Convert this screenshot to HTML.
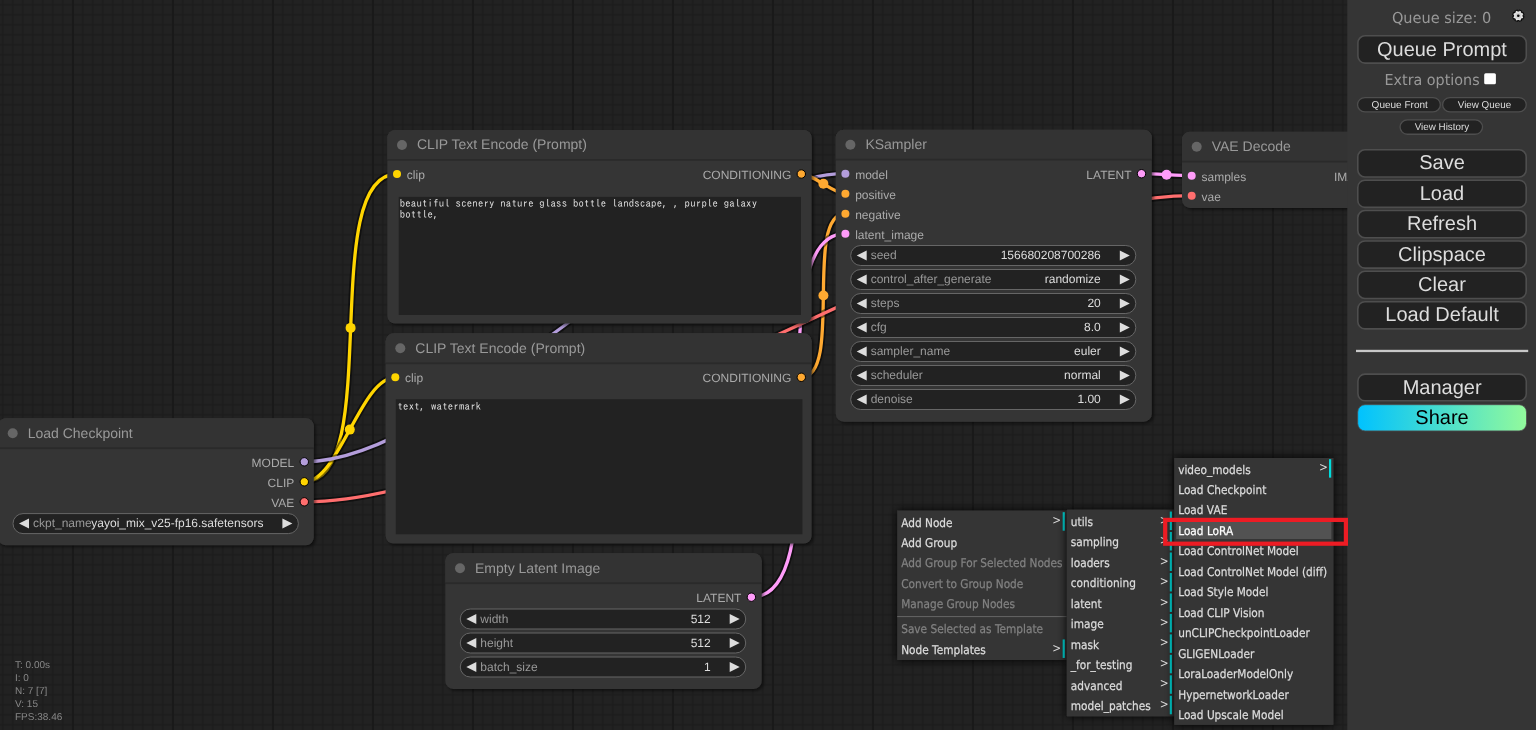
<!DOCTYPE html><html><head><meta charset="utf-8"><title>ComfyUI</title><style>html,body{margin:0;padding:0;background:#222;overflow:hidden}svg{display:block}</style></head><body>
<svg width="1536" height="730" viewBox="0 0 1536 730" text-rendering="geometricPrecision" style="opacity:0.999">
<defs>
<pattern id="g" x="67.7" y="-0.3" width="10" height="10" patternUnits="userSpaceOnUse"><rect width="10" height="10" fill="#222222"/><rect x="0" y="4.3" width="10" height="1.5" fill="#1c1c1c"/><rect x="4.2" y="0" width="1.6" height="10" fill="#1c1c1c"/></pattern>
<pattern id="G" x="23" y="0" width="100" height="100" patternUnits="userSpaceOnUse"><rect x="48.9" y="0" width="2.2" height="100" fill="#191919"/></pattern>
<filter id="sh" x="-5%" y="-10%" width="110%" height="125%"><feDropShadow dx="2" dy="2" stdDeviation="1.5" flood-color="#000" flood-opacity="0.5"/></filter>
<filter id="ms" x="-30%" y="-30%" width="160%" height="160%"><feDropShadow dx="0" dy="0" stdDeviation="5" flood-color="#000" flood-opacity="1"/></filter>
<linearGradient id="shg" x1="0" x2="1" y1="0" y2="0"><stop offset="0" stop-color="#00C2FF"/><stop offset="1" stop-color="#92FA9C"/></linearGradient>
</defs>
<rect width="1536" height="730" fill="url(#g)"/>
<rect width="1536" height="730" fill="url(#G)"/>
<path d="M304.3 481.8C384.7 481.8 316.6 174.0 397.0 174.0" fill="none" stroke="rgba(0,0,0,0.5)" stroke-width="7"/>
<path d="M304.3 481.8C384.7 481.8 316.6 174.0 397.0 174.0" fill="none" stroke="#FFD500" stroke-width="3.3"/>
<circle cx="350.6" cy="327.9" r="5" fill="#FFD500"/>
<path d="M304.3 481.8C338.9 481.8 360.7 377.3 395.3 377.3" fill="none" stroke="rgba(0,0,0,0.5)" stroke-width="7"/>
<path d="M304.3 481.8C338.9 481.8 360.7 377.3 395.3 377.3" fill="none" stroke="#FFD500" stroke-width="3.3"/>
<circle cx="349.8" cy="429.6" r="5" fill="#FFD500"/>
<path d="M304.3 461.8C457.6 461.8 692.1 173.7 845.4 173.7" fill="none" stroke="rgba(0,0,0,0.5)" stroke-width="7"/>
<path d="M304.3 461.8C457.6 461.8 692.1 173.7 845.4 173.7" fill="none" stroke="#B39DDB" stroke-width="3.3"/>
<circle cx="574.9" cy="317.8" r="5" fill="#B39DDB"/>
<path d="M801.3 174.0C813.4 174.0 833.3 193.7 845.4 193.7" fill="none" stroke="rgba(0,0,0,0.5)" stroke-width="7"/>
<path d="M801.3 174.0C813.4 174.0 833.3 193.7 845.4 193.7" fill="none" stroke="#FFA931" stroke-width="3.3"/>
<circle cx="823.4" cy="183.8" r="5" fill="#FFA931"/>
<path d="M801.3 377.3C843.7 377.3 803.0 213.7 845.4 213.7" fill="none" stroke="rgba(0,0,0,0.5)" stroke-width="7"/>
<path d="M801.3 377.3C843.7 377.3 803.0 213.7 845.4 213.7" fill="none" stroke="#FFA931" stroke-width="3.3"/>
<circle cx="823.4" cy="295.5" r="5" fill="#FFA931"/>
<path d="M751.4 597.2C845.3 597.2 751.5 233.7 845.4 233.7" fill="none" stroke="rgba(0,0,0,0.5)" stroke-width="7"/>
<path d="M751.4 597.2C845.3 597.2 751.5 233.7 845.4 233.7" fill="none" stroke="#FF9CF9" stroke-width="3.3"/>
<circle cx="798.4" cy="415.4" r="5" fill="#FF9CF9"/>
<path d="M1141.5 173.7C1154.1 173.7 1179.1 175.7 1191.7 175.7" fill="none" stroke="rgba(0,0,0,0.5)" stroke-width="7"/>
<path d="M1141.5 173.7C1154.1 173.7 1179.1 175.7 1191.7 175.7" fill="none" stroke="#FF9CF9" stroke-width="3.3"/>
<circle cx="1166.6" cy="174.7" r="5" fill="#FF9CF9"/>
<path d="M304.3 501.8C539.0 501.8 957.0 195.7 1191.7 195.7" fill="none" stroke="rgba(0,0,0,0.5)" stroke-width="7"/>
<path d="M304.3 501.8C539.0 501.8 957.0 195.7 1191.7 195.7" fill="none" stroke="#FF6E6E" stroke-width="3.3"/>
<circle cx="748.0" cy="348.8" r="5" fill="#FF6E6E"/>
<g transform="translate(-2.0,448.2)">
<rect x="0" y="-30" width="315.8" height="127.1" rx="8" fill="#353535" filter="url(#sh)"/>
<path d="M0 0V-22a8 8 0 0 1 8 -8H307.8a8 8 0 0 1 8 8V0Z" fill="#333333"/>
<rect x="0" y="-1" width="315.8" height="2" fill="rgba(0,0,0,0.16)"/>
<circle cx="14.7" cy="-15" r="5" fill="#666"/>
<text x="29.7" y="-10.40" font-size="14" fill="#999" font-family="Liberation Sans, Arial, sans-serif">Load Checkpoint</text>
<circle cx="306.30" cy="13.60" r="4.2" fill="#B39DDB" stroke="#000" stroke-width="1"/>
<text x="296.30" y="18.80" font-size="12" fill="#AAA" text-anchor="end" font-family="Liberation Sans, Arial, sans-serif">MODEL</text>
<circle cx="306.30" cy="33.60" r="4.2" fill="#FFD500" stroke="#000" stroke-width="1"/>
<text x="296.30" y="38.80" font-size="12" fill="#AAA" text-anchor="end" font-family="Liberation Sans, Arial, sans-serif">CLIP</text>
<circle cx="306.30" cy="53.60" r="4.2" fill="#FF6E6E" stroke="#000" stroke-width="1"/>
<text x="296.30" y="58.80" font-size="12" fill="#AAA" text-anchor="end" font-family="Liberation Sans, Arial, sans-serif">VAE</text>
<rect x="15" y="65.4" width="285.40" height="20" rx="10" fill="#222" stroke="#666" stroke-width="1"/>
<path d="M31 70.4L21 75.4L31 80.4Z" fill="#DDD"/>
<path d="M284.40 70.4L294.40 75.4L284.40 80.4Z" fill="#DDD"/>
<text x="35" y="79.0" font-size="12" fill="#999" font-family="Liberation Sans, Arial, sans-serif">ckpt_name</text>
<text x="265.40" y="79.0" font-size="12" fill="#DDD" text-anchor="end" font-family="Liberation Sans, Arial, sans-serif">yayoi_mix_v25-fp16.safetensors</text>
</g>
<g transform="translate(387.3,160.0)">
<rect x="0" y="-30" width="424.3" height="193.5" rx="8" fill="#353535" filter="url(#sh)"/>
<path d="M0 0V-22a8 8 0 0 1 8 -8H416.3a8 8 0 0 1 8 8V0Z" fill="#333333"/>
<rect x="0" y="-1" width="424.3" height="2" fill="rgba(0,0,0,0.16)"/>
<circle cx="14.7" cy="-15" r="5" fill="#666"/>
<text x="29.7" y="-10.90" font-size="14" fill="#999" font-family="Liberation Sans, Arial, sans-serif">CLIP Text Encode (Prompt)</text>
<circle cx="9.7" cy="14.0" r="4" fill="#FFD500"/>
<text x="19.5" y="19.2" font-size="12" fill="#AAA" font-family="Liberation Sans, Arial, sans-serif">clip</text>
<circle cx="414.00" cy="14.00" r="4.2" fill="#FFA931" stroke="#000" stroke-width="1"/>
<text x="404.00" y="19.20" font-size="12" fill="#AAA" text-anchor="end" font-family="Liberation Sans, Arial, sans-serif">CONDITIONING</text>
</g>
<g transform="translate(385.6,363.3)">
<rect x="0" y="-30" width="426.0" height="210.2" rx="8" fill="#353535" filter="url(#sh)"/>
<path d="M0 0V-22a8 8 0 0 1 8 -8H418.0a8 8 0 0 1 8 8V0Z" fill="#333333"/>
<rect x="0" y="-1" width="426.0" height="2" fill="rgba(0,0,0,0.16)"/>
<circle cx="14.7" cy="-15" r="5" fill="#666"/>
<text x="29.7" y="-10.40" font-size="14" fill="#999" font-family="Liberation Sans, Arial, sans-serif">CLIP Text Encode (Prompt)</text>
<circle cx="9.7" cy="14.0" r="4" fill="#FFD500"/>
<text x="19.5" y="19.2" font-size="12" fill="#AAA" font-family="Liberation Sans, Arial, sans-serif">clip</text>
<circle cx="415.70" cy="14.00" r="4.2" fill="#FFA931" stroke="#000" stroke-width="1"/>
<text x="405.70" y="19.20" font-size="12" fill="#AAA" text-anchor="end" font-family="Liberation Sans, Arial, sans-serif">CONDITIONING</text>
</g>
<g transform="translate(835.7,159.7)">
<rect x="0" y="-30" width="316.1" height="292.0" rx="8" fill="#353535" filter="url(#sh)"/>
<path d="M0 0V-22a8 8 0 0 1 8 -8H308.1a8 8 0 0 1 8 8V0Z" fill="#333333"/>
<rect x="0" y="-1" width="316.1" height="2" fill="rgba(0,0,0,0.16)"/>
<circle cx="14.7" cy="-15" r="5" fill="#666"/>
<text x="29.7" y="-10.40" font-size="14" fill="#999" font-family="Liberation Sans, Arial, sans-serif">KSampler</text>
<circle cx="9.7" cy="14.0" r="4" fill="#B39DDB"/>
<text x="19.5" y="19.2" font-size="12" fill="#AAA" font-family="Liberation Sans, Arial, sans-serif">model</text>
<circle cx="9.7" cy="34.0" r="4" fill="#FFA931"/>
<text x="19.5" y="39.2" font-size="12" fill="#AAA" font-family="Liberation Sans, Arial, sans-serif">positive</text>
<circle cx="9.7" cy="54.0" r="4" fill="#FFA931"/>
<text x="19.5" y="59.2" font-size="12" fill="#AAA" font-family="Liberation Sans, Arial, sans-serif">negative</text>
<circle cx="9.7" cy="74.0" r="4" fill="#FF9CF9"/>
<text x="19.5" y="79.2" font-size="12" fill="#AAA" font-family="Liberation Sans, Arial, sans-serif">latent_image</text>
<circle cx="305.80" cy="14.00" r="4.2" fill="#FF9CF9" stroke="#000" stroke-width="1"/>
<text x="295.80" y="19.20" font-size="12" fill="#AAA" text-anchor="end" font-family="Liberation Sans, Arial, sans-serif">LATENT</text>
<rect x="15" y="85.8" width="285.10" height="20" rx="10" fill="#222" stroke="#666" stroke-width="1"/>
<path d="M31 90.8L21 95.8L31 100.8Z" fill="#DDD"/>
<path d="M284.10 90.8L294.10 95.8L284.10 100.8Z" fill="#DDD"/>
<text x="35" y="99.39999999999999" font-size="12" fill="#999" font-family="Liberation Sans, Arial, sans-serif">seed</text>
<text x="265.10" y="99.39999999999999" font-size="12" fill="#DDD" text-anchor="end" font-family="Liberation Sans, Arial, sans-serif">156680208700286</text>
<rect x="15" y="109.8" width="285.10" height="20" rx="10" fill="#222" stroke="#666" stroke-width="1"/>
<path d="M31 114.8L21 119.8L31 124.8Z" fill="#DDD"/>
<path d="M284.10 114.8L294.10 119.8L284.10 124.8Z" fill="#DDD"/>
<text x="35" y="123.39999999999999" font-size="12" fill="#999" font-family="Liberation Sans, Arial, sans-serif">control_after_generate</text>
<text x="265.10" y="123.39999999999999" font-size="12" fill="#DDD" text-anchor="end" font-family="Liberation Sans, Arial, sans-serif">randomize</text>
<rect x="15" y="133.8" width="285.10" height="20" rx="10" fill="#222" stroke="#666" stroke-width="1"/>
<path d="M31 138.8L21 143.8L31 148.8Z" fill="#DDD"/>
<path d="M284.10 138.8L294.10 143.8L284.10 148.8Z" fill="#DDD"/>
<text x="35" y="147.4" font-size="12" fill="#999" font-family="Liberation Sans, Arial, sans-serif">steps</text>
<text x="265.10" y="147.4" font-size="12" fill="#DDD" text-anchor="end" font-family="Liberation Sans, Arial, sans-serif">20</text>
<rect x="15" y="157.8" width="285.10" height="20" rx="10" fill="#222" stroke="#666" stroke-width="1"/>
<path d="M31 162.8L21 167.8L31 172.8Z" fill="#DDD"/>
<path d="M284.10 162.8L294.10 167.8L284.10 172.8Z" fill="#DDD"/>
<text x="35" y="171.4" font-size="12" fill="#999" font-family="Liberation Sans, Arial, sans-serif">cfg</text>
<text x="265.10" y="171.4" font-size="12" fill="#DDD" text-anchor="end" font-family="Liberation Sans, Arial, sans-serif">8.0</text>
<rect x="15" y="181.8" width="285.10" height="20" rx="10" fill="#222" stroke="#666" stroke-width="1"/>
<path d="M31 186.8L21 191.8L31 196.8Z" fill="#DDD"/>
<path d="M284.10 186.8L294.10 191.8L284.10 196.8Z" fill="#DDD"/>
<text x="35" y="195.4" font-size="12" fill="#999" font-family="Liberation Sans, Arial, sans-serif">sampler_name</text>
<text x="265.10" y="195.4" font-size="12" fill="#DDD" text-anchor="end" font-family="Liberation Sans, Arial, sans-serif">euler</text>
<rect x="15" y="205.8" width="285.10" height="20" rx="10" fill="#222" stroke="#666" stroke-width="1"/>
<path d="M31 210.8L21 215.8L31 220.8Z" fill="#DDD"/>
<path d="M284.10 210.8L294.10 215.8L284.10 220.8Z" fill="#DDD"/>
<text x="35" y="219.4" font-size="12" fill="#999" font-family="Liberation Sans, Arial, sans-serif">scheduler</text>
<text x="265.10" y="219.4" font-size="12" fill="#DDD" text-anchor="end" font-family="Liberation Sans, Arial, sans-serif">normal</text>
<rect x="15" y="229.8" width="285.10" height="20" rx="10" fill="#222" stroke="#666" stroke-width="1"/>
<path d="M31 234.8L21 239.8L31 244.8Z" fill="#DDD"/>
<path d="M284.10 234.8L294.10 239.8L284.10 244.8Z" fill="#DDD"/>
<text x="35" y="243.4" font-size="12" fill="#999" font-family="Liberation Sans, Arial, sans-serif">denoise</text>
<text x="265.10" y="243.4" font-size="12" fill="#DDD" text-anchor="end" font-family="Liberation Sans, Arial, sans-serif">1.00</text>
</g>
<g transform="translate(1182.0,161.7)">
<rect x="0" y="-30" width="211.0" height="76.2" rx="8" fill="#353535" filter="url(#sh)"/>
<path d="M0 0V-22a8 8 0 0 1 8 -8H203.0a8 8 0 0 1 8 8V0Z" fill="#333333"/>
<rect x="0" y="-1" width="211.0" height="2" fill="rgba(0,0,0,0.16)"/>
<circle cx="14.7" cy="-15" r="5" fill="#666"/>
<text x="29.7" y="-10.70" font-size="14" fill="#999" font-family="Liberation Sans, Arial, sans-serif">VAE Decode</text>
<circle cx="9.7" cy="14.0" r="4" fill="#FF9CF9"/>
<text x="19.5" y="19.2" font-size="12" fill="#AAA" font-family="Liberation Sans, Arial, sans-serif">samples</text>
<circle cx="9.7" cy="34.0" r="4" fill="#FF6E6E"/>
<text x="19.5" y="39.2" font-size="12" fill="#AAA" font-family="Liberation Sans, Arial, sans-serif">vae</text>
<circle cx="200.70" cy="14.00" r="4.2" fill="#64B5F6" stroke="#000" stroke-width="1"/>
<text x="190.70" y="19.20" font-size="12" fill="#AAA" text-anchor="end" font-family="Liberation Sans, Arial, sans-serif">IMAGE</text>
</g>
<g transform="translate(445.3,583.2)">
<rect x="0" y="-30" width="316.4" height="135.7" rx="8" fill="#353535" filter="url(#sh)"/>
<path d="M0 0V-22a8 8 0 0 1 8 -8H308.4a8 8 0 0 1 8 8V0Z" fill="#333333"/>
<rect x="0" y="-1" width="316.4" height="2" fill="rgba(0,0,0,0.16)"/>
<circle cx="14.7" cy="-15" r="5" fill="#666"/>
<text x="29.7" y="-10.40" font-size="14" fill="#999" font-family="Liberation Sans, Arial, sans-serif">Empty Latent Image</text>
<circle cx="306.10" cy="14.00" r="4.2" fill="#FF9CF9" stroke="#000" stroke-width="1"/>
<text x="296.10" y="19.20" font-size="12" fill="#AAA" text-anchor="end" font-family="Liberation Sans, Arial, sans-serif">LATENT</text>
<rect x="15" y="25.8" width="285.40" height="20" rx="10" fill="#222" stroke="#666" stroke-width="1"/>
<path d="M31 30.8L21 35.8L31 40.8Z" fill="#DDD"/>
<path d="M284.40 30.8L294.40 35.8L284.40 40.8Z" fill="#DDD"/>
<text x="35" y="39.4" font-size="12" fill="#999" font-family="Liberation Sans, Arial, sans-serif">width</text>
<text x="265.40" y="39.4" font-size="12" fill="#DDD" text-anchor="end" font-family="Liberation Sans, Arial, sans-serif">512</text>
<rect x="15" y="49.8" width="285.40" height="20" rx="10" fill="#222" stroke="#666" stroke-width="1"/>
<path d="M31 54.8L21 59.8L31 64.8Z" fill="#DDD"/>
<path d="M284.40 54.8L294.40 59.8L284.40 64.8Z" fill="#DDD"/>
<text x="35" y="63.4" font-size="12" fill="#999" font-family="Liberation Sans, Arial, sans-serif">height</text>
<text x="265.40" y="63.4" font-size="12" fill="#DDD" text-anchor="end" font-family="Liberation Sans, Arial, sans-serif">512</text>
<rect x="15" y="73.8" width="285.40" height="20" rx="10" fill="#222" stroke="#666" stroke-width="1"/>
<path d="M31 78.8L21 83.8L31 88.8Z" fill="#DDD"/>
<path d="M284.40 78.8L294.40 83.8L284.40 88.8Z" fill="#DDD"/>
<text x="35" y="87.39999999999999" font-size="12" fill="#999" font-family="Liberation Sans, Arial, sans-serif">batch_size</text>
<text x="265.40" y="87.39999999999999" font-size="12" fill="#DDD" text-anchor="end" font-family="Liberation Sans, Arial, sans-serif">1</text>
</g>
<rect x="398.7" y="196.9" width="402.3" height="118.1" fill="#222"/>
<text x="399.7" y="207.20000000000002" font-size="10.6" letter-spacing="0.29" fill="#DDD" font-family="IPAGothic, Liberation Mono, monospace" xml:space="preserve">beautiful scenery nature glass bottle landscape, , purple galaxy</text>
<text x="399.7" y="217.9" font-size="10.6" letter-spacing="0.29" fill="#DDD" font-family="IPAGothic, Liberation Mono, monospace" xml:space="preserve">bottle,</text>
<rect x="395.8" y="399.2" width="406.59999999999997" height="135.09999999999997" fill="#222"/>
<text x="397.5" y="410.4" font-size="10.6" letter-spacing="0.29" fill="#DDD" font-family="IPAGothic, Liberation Mono, monospace" xml:space="preserve">text, watermark</text>
<text x="15" y="668.0" font-size="10" fill="#888" font-family="Liberation Sans, Arial, sans-serif">T: 0.00s</text>
<text x="15" y="681.0" font-size="10" fill="#888" font-family="Liberation Sans, Arial, sans-serif">I: 0</text>
<text x="15" y="694.0" font-size="10" fill="#888" font-family="Liberation Sans, Arial, sans-serif">N: 7 [7]</text>
<text x="15" y="707.0" font-size="10" fill="#888" font-family="Liberation Sans, Arial, sans-serif">V: 15</text>
<text x="15" y="720.0" font-size="10" fill="#888" font-family="Liberation Sans, Arial, sans-serif">FPS:38.46</text>
<rect x="1347.3" y="0" width="188.70000000000005" height="730" fill="#353535"/>
<text x="1391.90" y="22.5" font-size="15" fill="#999" textLength="99.37" lengthAdjust="spacingAndGlyphs" font-family="DejaVu Sans, Liberation Sans, sans-serif" >Queue size: 0</text>
<text x="1384.50" y="85.2" font-size="15" fill="#999" textLength="95.11" lengthAdjust="spacingAndGlyphs" font-family="DejaVu Sans, Liberation Sans, sans-serif" >Extra options</text>
<rect x="1484.2" y="73.2" width="11.7" height="11.1" rx="1.5" fill="#fff"/>
<path d="M1519.33 10.04L1521.57 10.97L1521.30 11.95L1522.05 12.70L1523.03 12.43L1523.96 14.67L1523.07 15.17L1523.07 16.23L1523.96 16.73L1523.03 18.97L1522.05 18.70L1521.30 19.45L1521.57 20.43L1519.33 21.36L1518.83 20.47L1517.77 20.47L1517.27 21.36L1515.03 20.43L1515.30 19.45L1514.55 18.70L1513.57 18.97L1512.64 16.73L1513.53 16.23L1513.53 15.17L1512.64 14.67L1513.57 12.43L1514.55 12.70L1515.30 11.95L1515.03 10.97L1517.27 10.04L1517.77 10.93L1518.83 10.93Z" fill="#e4e4e4" stroke="#0c0c0c" stroke-width="1.1" stroke-linejoin="round"/>
<circle cx="1518.3" cy="15.7" r="3.0" fill="#d2d2d2"/>
<circle cx="1518.3" cy="15.7" r="1.3" fill="#080808"/>
<rect x="1357.90" y="35.80" width="168.40" height="27.30" rx="7.2" fill="#222" stroke="#4e4e4e" stroke-width="1.6"/>
<text x="1377.00" y="55.5" font-size="20" fill="#ddd" textLength="129.87" lengthAdjust="spacingAndGlyphs" font-family="Liberation Sans, Arial, sans-serif" >Queue Prompt</text>
<rect x="1357.55" y="97.55" width="82.80" height="14.30" rx="7.35" fill="#222" stroke="#4e4e4e" stroke-width="1.3"/>
<text x="1371.60" y="107.9" font-size="10" fill="#ddd" textLength="56.29" lengthAdjust="spacingAndGlyphs" font-family="Liberation Sans, Arial, sans-serif" >Queue Front</text>
<rect x="1442.65" y="97.55" width="83.60" height="14.30" rx="7.35" fill="#222" stroke="#4e4e4e" stroke-width="1.3"/>
<text x="1457.80" y="107.9" font-size="10" fill="#ddd" textLength="53.30" lengthAdjust="spacingAndGlyphs" font-family="Liberation Sans, Arial, sans-serif" >View Queue</text>
<rect x="1400.05" y="119.95" width="82.50" height="14.30" rx="7.35" fill="#222" stroke="#4e4e4e" stroke-width="1.3"/>
<text x="1414.70" y="130.1" font-size="10" fill="#ddd" textLength="54.49" lengthAdjust="spacingAndGlyphs" font-family="Liberation Sans, Arial, sans-serif" >View History</text>
<rect x="1357.80" y="149.80" width="168.40" height="27.20" rx="7.2" fill="#222" stroke="#4e4e4e" stroke-width="1.6"/>
<text x="1442.00" y="169.4" font-size="20" fill="#ddd" text-anchor="middle" font-family="Liberation Sans, Arial, sans-serif">Save</text>
<rect x="1357.80" y="180.18" width="168.40" height="27.20" rx="7.2" fill="#222" stroke="#4e4e4e" stroke-width="1.6"/>
<text x="1442.00" y="199.8" font-size="20" fill="#ddd" text-anchor="middle" font-family="Liberation Sans, Arial, sans-serif">Load</text>
<rect x="1357.80" y="210.56" width="168.40" height="27.20" rx="7.2" fill="#222" stroke="#4e4e4e" stroke-width="1.6"/>
<text x="1442.00" y="230.2" font-size="20" fill="#ddd" text-anchor="middle" font-family="Liberation Sans, Arial, sans-serif">Refresh</text>
<rect x="1357.80" y="240.94" width="168.40" height="27.20" rx="7.2" fill="#222" stroke="#4e4e4e" stroke-width="1.6"/>
<text x="1442.00" y="260.6" font-size="20" fill="#ddd" text-anchor="middle" font-family="Liberation Sans, Arial, sans-serif">Clipspace</text>
<rect x="1357.80" y="271.32" width="168.40" height="27.20" rx="7.2" fill="#222" stroke="#4e4e4e" stroke-width="1.6"/>
<text x="1442.00" y="291.0" font-size="20" fill="#ddd" text-anchor="middle" font-family="Liberation Sans, Arial, sans-serif">Clear</text>
<rect x="1357.80" y="301.70" width="168.40" height="27.20" rx="7.2" fill="#222" stroke="#4e4e4e" stroke-width="1.6"/>
<text x="1442.00" y="321.4" font-size="20" fill="#ddd" text-anchor="middle" font-family="Liberation Sans, Arial, sans-serif">Load Default</text>
<rect x="1356" y="349.8" width="172.2" height="2.3" fill="#c8c8c8"/>
<rect x="1357.90" y="374.10" width="168.40" height="26.70" rx="7.2" fill="#222" stroke="#4e4e4e" stroke-width="1.6"/>
<text x="1442.10" y="393.7" font-size="20" fill="#ddd" text-anchor="middle" font-family="Liberation Sans, Arial, sans-serif">Manager</text>
<rect x="1357.7" y="404.7" width="168.8" height="26.2" rx="7.4" fill="url(#shg)" stroke="#4e4e4e" stroke-width="0.8"/>
<text x="1442" y="423.7" font-size="20" fill="#000" text-anchor="middle" font-family="Liberation Sans, Arial, sans-serif">Share</text>
<rect x="897.2" y="510.5" width="169.40" height="149.50" fill="#353535" filter="url(#ms)"/>
<text x="901.20" y="526.60" font-size="12" fill="#ddd" textLength="51.36" lengthAdjust="spacingAndGlyphs" stroke="#ddd" stroke-width="0.25"  font-family="DejaVu Sans, Liberation Sans, sans-serif">Add Node</text>
<rect x="1062.70" y="512.20" width="2.2" height="18.5" fill="#00dcdc"/>
<text x="1061.00" y="524.30" font-size="12" fill="#ddd" textLength="8.85" lengthAdjust="spacingAndGlyphs" stroke="#ddd" stroke-width="0" text-anchor="end" font-family="DejaVu Sans, Liberation Sans, sans-serif">&gt;</text>
<text x="901.20" y="546.95" font-size="12" fill="#ddd" textLength="55.95" lengthAdjust="spacingAndGlyphs" stroke="#ddd" stroke-width="0.25"  font-family="DejaVu Sans, Liberation Sans, sans-serif">Add Group</text>
<text x="901.20" y="567.40" font-size="12" fill="#828282" textLength="161.36" lengthAdjust="spacingAndGlyphs" stroke="#828282" stroke-width="0.25"  font-family="DejaVu Sans, Liberation Sans, sans-serif">Add Group For Selected Nodes</text>
<text x="901.20" y="587.80" font-size="12" fill="#828282" textLength="122.14" lengthAdjust="spacingAndGlyphs" stroke="#828282" stroke-width="0.25"  font-family="DejaVu Sans, Liberation Sans, sans-serif">Convert to Group Node</text>
<text x="901.20" y="608.40" font-size="12" fill="#828282" textLength="113.87" lengthAdjust="spacingAndGlyphs" stroke="#828282" stroke-width="0.25"  font-family="DejaVu Sans, Liberation Sans, sans-serif">Manage Group Nodes</text>
<rect x="897.2" y="616.1" width="169.40" height="1" fill="#666"/>
<text x="901.20" y="633.15" font-size="12" fill="#828282" textLength="141.93" lengthAdjust="spacingAndGlyphs" stroke="#828282" stroke-width="0.25"  font-family="DejaVu Sans, Liberation Sans, sans-serif">Save Selected as Template</text>
<text x="901.20" y="653.85" font-size="12" fill="#ddd" textLength="84.60" lengthAdjust="spacingAndGlyphs" stroke="#ddd" stroke-width="0.25"  font-family="DejaVu Sans, Liberation Sans, sans-serif">Node Templates</text>
<rect x="1062.70" y="639.45" width="2.2" height="18.5" fill="#00dcdc"/>
<text x="1061.00" y="651.55" font-size="12" fill="#ddd" textLength="8.85" lengthAdjust="spacingAndGlyphs" stroke="#ddd" stroke-width="0" text-anchor="end" font-family="DejaVu Sans, Liberation Sans, sans-serif">&gt;</text>
<rect x="1066.8" y="509.7" width="107.40" height="206.60" fill="#353535" filter="url(#ms)"/>
<text x="1070.80" y="525.95" font-size="12" fill="#ddd" textLength="22.20" lengthAdjust="spacingAndGlyphs" stroke="#ddd" stroke-width="0.25"  font-family="DejaVu Sans, Liberation Sans, sans-serif">utils</text>
<rect x="1169.80" y="511.55" width="2.2" height="18.5" fill="#00dcdc"/>
<text x="1168.60" y="523.65" font-size="12" fill="#ddd" textLength="8.85" lengthAdjust="spacingAndGlyphs" stroke="#ddd" stroke-width="0" text-anchor="end" font-family="DejaVu Sans, Liberation Sans, sans-serif">&gt;</text>
<text x="1070.80" y="546.42" font-size="12" fill="#ddd" textLength="48.23" lengthAdjust="spacingAndGlyphs" stroke="#ddd" stroke-width="0.25"  font-family="DejaVu Sans, Liberation Sans, sans-serif">sampling</text>
<rect x="1169.80" y="532.02" width="2.2" height="18.5" fill="#00dcdc"/>
<text x="1168.60" y="544.12" font-size="12" fill="#ddd" textLength="8.85" lengthAdjust="spacingAndGlyphs" stroke="#ddd" stroke-width="0" text-anchor="end" font-family="DejaVu Sans, Liberation Sans, sans-serif">&gt;</text>
<text x="1070.80" y="566.89" font-size="12" fill="#ddd" textLength="38.91" lengthAdjust="spacingAndGlyphs" stroke="#ddd" stroke-width="0.25"  font-family="DejaVu Sans, Liberation Sans, sans-serif">loaders</text>
<rect x="1169.80" y="552.49" width="2.2" height="18.5" fill="#00dcdc"/>
<text x="1168.60" y="564.59" font-size="12" fill="#ddd" textLength="8.85" lengthAdjust="spacingAndGlyphs" stroke="#ddd" stroke-width="0" text-anchor="end" font-family="DejaVu Sans, Liberation Sans, sans-serif">&gt;</text>
<text x="1070.80" y="587.36" font-size="12" fill="#ddd" textLength="65.16" lengthAdjust="spacingAndGlyphs" stroke="#ddd" stroke-width="0.25"  font-family="DejaVu Sans, Liberation Sans, sans-serif">conditioning</text>
<rect x="1169.80" y="572.96" width="2.2" height="18.5" fill="#00dcdc"/>
<text x="1168.60" y="585.06" font-size="12" fill="#ddd" textLength="8.85" lengthAdjust="spacingAndGlyphs" stroke="#ddd" stroke-width="0" text-anchor="end" font-family="DejaVu Sans, Liberation Sans, sans-serif">&gt;</text>
<text x="1070.80" y="607.83" font-size="12" fill="#ddd" textLength="30.88" lengthAdjust="spacingAndGlyphs" stroke="#ddd" stroke-width="0.25"  font-family="DejaVu Sans, Liberation Sans, sans-serif">latent</text>
<rect x="1169.80" y="593.43" width="2.2" height="18.5" fill="#00dcdc"/>
<text x="1168.60" y="605.53" font-size="12" fill="#ddd" textLength="8.85" lengthAdjust="spacingAndGlyphs" stroke="#ddd" stroke-width="0" text-anchor="end" font-family="DejaVu Sans, Liberation Sans, sans-serif">&gt;</text>
<text x="1070.80" y="628.30" font-size="12" fill="#ddd" textLength="32.89" lengthAdjust="spacingAndGlyphs" stroke="#ddd" stroke-width="0.25"  font-family="DejaVu Sans, Liberation Sans, sans-serif">image</text>
<rect x="1169.80" y="613.90" width="2.2" height="18.5" fill="#00dcdc"/>
<text x="1168.60" y="626.00" font-size="12" fill="#ddd" textLength="8.85" lengthAdjust="spacingAndGlyphs" stroke="#ddd" stroke-width="0" text-anchor="end" font-family="DejaVu Sans, Liberation Sans, sans-serif">&gt;</text>
<text x="1070.80" y="648.77" font-size="12" fill="#ddd" textLength="28.38" lengthAdjust="spacingAndGlyphs" stroke="#ddd" stroke-width="0.25"  font-family="DejaVu Sans, Liberation Sans, sans-serif">mask</text>
<rect x="1169.80" y="634.37" width="2.2" height="18.5" fill="#00dcdc"/>
<text x="1168.60" y="646.47" font-size="12" fill="#ddd" textLength="8.85" lengthAdjust="spacingAndGlyphs" stroke="#ddd" stroke-width="0" text-anchor="end" font-family="DejaVu Sans, Liberation Sans, sans-serif">&gt;</text>
<text x="1070.80" y="669.24" font-size="12" fill="#ddd" textLength="61.69" lengthAdjust="spacingAndGlyphs" stroke="#ddd" stroke-width="0.25"  font-family="DejaVu Sans, Liberation Sans, sans-serif">_for_testing</text>
<rect x="1169.80" y="654.84" width="2.2" height="18.5" fill="#00dcdc"/>
<text x="1168.60" y="666.94" font-size="12" fill="#ddd" textLength="8.85" lengthAdjust="spacingAndGlyphs" stroke="#ddd" stroke-width="0" text-anchor="end" font-family="DejaVu Sans, Liberation Sans, sans-serif">&gt;</text>
<text x="1070.80" y="689.71" font-size="12" fill="#ddd" textLength="51.59" lengthAdjust="spacingAndGlyphs" stroke="#ddd" stroke-width="0.25"  font-family="DejaVu Sans, Liberation Sans, sans-serif">advanced</text>
<rect x="1169.80" y="675.31" width="2.2" height="18.5" fill="#00dcdc"/>
<text x="1168.60" y="687.41" font-size="12" fill="#ddd" textLength="8.85" lengthAdjust="spacingAndGlyphs" stroke="#ddd" stroke-width="0" text-anchor="end" font-family="DejaVu Sans, Liberation Sans, sans-serif">&gt;</text>
<text x="1070.80" y="710.18" font-size="12" fill="#ddd" textLength="79.97" lengthAdjust="spacingAndGlyphs" stroke="#ddd" stroke-width="0.25"  font-family="DejaVu Sans, Liberation Sans, sans-serif">model_patches</text>
<rect x="1169.80" y="695.78" width="2.2" height="18.5" fill="#00dcdc"/>
<text x="1168.60" y="707.88" font-size="12" fill="#ddd" textLength="8.85" lengthAdjust="spacingAndGlyphs" stroke="#ddd" stroke-width="0" text-anchor="end" font-family="DejaVu Sans, Liberation Sans, sans-serif">&gt;</text>
<rect x="1174.2" y="458" width="159.20" height="266.90" fill="#353535" filter="url(#ms)"/>
<text x="1178.20" y="473.55" font-size="12" fill="#ddd" textLength="72.51" lengthAdjust="spacingAndGlyphs" stroke="#ddd" stroke-width="0.25"  font-family="DejaVu Sans, Liberation Sans, sans-serif">video_models</text>
<rect x="1329.00" y="459.15" width="2.2" height="18.5" fill="#00dcdc"/>
<text x="1327.80" y="471.25" font-size="12" fill="#ddd" textLength="8.85" lengthAdjust="spacingAndGlyphs" stroke="#ddd" stroke-width="0" text-anchor="end" font-family="DejaVu Sans, Liberation Sans, sans-serif">&gt;</text>
<text x="1178.20" y="494.00" font-size="12" fill="#ddd" textLength="88.11" lengthAdjust="spacingAndGlyphs" stroke="#ddd" stroke-width="0.25"  font-family="DejaVu Sans, Liberation Sans, sans-serif">Load Checkpoint</text>
<text x="1178.20" y="514.45" font-size="12" fill="#ddd" textLength="49.13" lengthAdjust="spacingAndGlyphs" stroke="#ddd" stroke-width="0.25"  font-family="DejaVu Sans, Liberation Sans, sans-serif">Load VAE</text>
<rect x="1176.2" y="520.50" width="155.20" height="18.5" fill="#525252"/>
<text x="1178.20" y="534.90" font-size="12" fill="#fff" textLength="54.98" lengthAdjust="spacingAndGlyphs" stroke="#fff" stroke-width="0.25"  font-family="DejaVu Sans, Liberation Sans, sans-serif">Load LoRA</text>
<text x="1178.20" y="555.35" font-size="12" fill="#ddd" textLength="120.46" lengthAdjust="spacingAndGlyphs" stroke="#ddd" stroke-width="0.25"  font-family="DejaVu Sans, Liberation Sans, sans-serif">Load ControlNet Model</text>
<text x="1178.20" y="575.80" font-size="12" fill="#ddd" textLength="148.97" lengthAdjust="spacingAndGlyphs" stroke="#ddd" stroke-width="0.25"  font-family="DejaVu Sans, Liberation Sans, sans-serif">Load ControlNet Model (diff)</text>
<text x="1178.20" y="596.25" font-size="12" fill="#ddd" textLength="90.28" lengthAdjust="spacingAndGlyphs" stroke="#ddd" stroke-width="0.25"  font-family="DejaVu Sans, Liberation Sans, sans-serif">Load Style Model</text>
<text x="1178.20" y="616.70" font-size="12" fill="#ddd" textLength="86.30" lengthAdjust="spacingAndGlyphs" stroke="#ddd" stroke-width="0.25"  font-family="DejaVu Sans, Liberation Sans, sans-serif">Load CLIP Vision</text>
<text x="1178.20" y="637.15" font-size="12" fill="#ddd" textLength="131.71" lengthAdjust="spacingAndGlyphs" stroke="#ddd" stroke-width="0.25"  font-family="DejaVu Sans, Liberation Sans, sans-serif">unCLIPCheckpointLoader</text>
<text x="1178.20" y="657.60" font-size="12" fill="#ddd" textLength="76.11" lengthAdjust="spacingAndGlyphs" stroke="#ddd" stroke-width="0.25"  font-family="DejaVu Sans, Liberation Sans, sans-serif">GLIGENLoader</text>
<text x="1178.20" y="678.05" font-size="12" fill="#ddd" textLength="115.04" lengthAdjust="spacingAndGlyphs" stroke="#ddd" stroke-width="0.25"  font-family="DejaVu Sans, Liberation Sans, sans-serif">LoraLoaderModelOnly</text>
<text x="1178.20" y="698.50" font-size="12" fill="#ddd" textLength="110.60" lengthAdjust="spacingAndGlyphs" stroke="#ddd" stroke-width="0.25"  font-family="DejaVu Sans, Liberation Sans, sans-serif">HypernetworkLoader</text>
<text x="1178.20" y="718.95" font-size="12" fill="#ddd" textLength="105.39" lengthAdjust="spacingAndGlyphs" stroke="#ddd" stroke-width="0.25"  font-family="DejaVu Sans, Liberation Sans, sans-serif">Load Upscale Model</text>
<rect x="1165.2" y="519.9" width="180.7" height="23.8" fill="none" stroke="#ed1c24" stroke-width="4.2"/>
</svg>
</body></html>
